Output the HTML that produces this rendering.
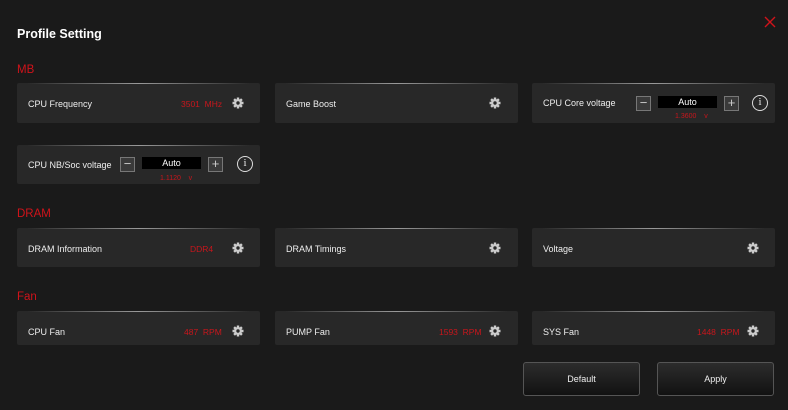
<!DOCTYPE html>
<html><head><style>
*{margin:0;padding:0;box-sizing:border-box}
body{width:788px;height:410px;background:#1a1a1a;font-family:"Liberation Sans",sans-serif;color:#e6e6e6;position:relative;overflow:hidden}
.a{position:absolute}
.t{font-size:12.5px;font-weight:bold;color:#fff;left:17px;top:27px}
.h{font-size:11.5px;color:#d0131a;left:17px}
.c{position:absolute;width:243px;background:#282828;border-radius:2px}
.c:before{content:"";position:absolute;left:10px;right:10px;top:0;height:1px;background:linear-gradient(90deg,transparent,#999 50%,transparent)}
.l{position:absolute;left:11px;font-size:9px;color:#eee}
.v{position:absolute;font-size:8.5px;color:#c8161c}
.g{position:absolute;width:12px;height:12px}
.bx{position:absolute;width:15px;height:15px;border:1px solid #777;background:#3a3a3a;color:#ccc;font-size:13px;line-height:12px;text-align:center}
.au{position:absolute;width:59px;height:12px;background:#000;color:#fff;font-size:9px;text-align:center;line-height:12px}
.i{position:absolute;width:16px;height:16px;border:1.5px solid #ddd;border-radius:50%;font-size:11px;text-align:center;line-height:13px;color:#eee;font-family:"Liberation Serif",serif}
.btn{position:absolute;top:362px;width:117px;height:34px;border:1px solid #555;border-radius:3px;background:linear-gradient(#2c2c2c,#121212);font-size:9px;text-align:center;line-height:33px;color:#eee}
</style></head><body>
<svg class="a" style="left:764px;top:16px" width="12" height="12"><path d="M1 1L11 11M11 1L1 11" stroke="#d0131a" stroke-width="1.4"/></svg>
<div class="a t">Profile Setting</div>
<div class="a h" style="top:64px">MB</div>
<div class="a h" style="top:208px">DRAM</div>
<div class="a h" style="top:291px">Fan</div>

<svg width="0" height="0" style="position:absolute"><defs><g id="gear"><circle cx="6" cy="6" r="4" fill="#ccc"/><g stroke="#ccc" stroke-width="2.4"><path d="M6 0.5V11.5M0.5 6H11.5M2.1 2.1L9.9 9.9M9.9 2.1L2.1 9.9"/></g><circle cx="6" cy="6" r="1.7" fill="#282828"/></g></defs></svg>

<div class="c" style="left:17px;top:83px;height:40px"><span class="l" style="top:16px">CPU Frequency</span><span class="v" style="left:164px;top:16px">3501 &nbsp;MHz</span><svg class="g" style="left:215px;top:14px"><use href="#gear"/></svg></div>
<div class="c" style="left:275px;top:83px;height:40px"><span class="l" style="top:16px">Game Boost</span><svg class="g" style="left:214px;top:14px"><use href="#gear"/></svg></div>
<div class="c" style="left:532px;top:83px;height:40px"><span class="l" style="top:15px">CPU Core voltage</span><div class="bx" style="left:104px;top:13px">−</div><div class="au" style="left:126px;top:13px">Auto</div><div class="bx" style="left:192px;top:13px">+</div><div class="i" style="left:220px;top:12px">i</div><span class="v" style="left:143px;top:30px;font-size:7px">1.3600 &nbsp;&nbsp;&nbsp;v</span></div>
<div class="c" style="left:17px;top:145px;height:39px"><span class="l" style="top:15px">CPU NB/Soc voltage</span><div class="bx" style="left:103px;top:12px">−</div><div class="au" style="left:125px;top:12px">Auto</div><div class="bx" style="left:191px;top:12px">+</div><div class="i" style="left:220px;top:11px">i</div><span class="v" style="left:143px;top:30px;font-size:7px">1.1120 &nbsp;&nbsp;&nbsp;v</span></div>

<div class="c" style="left:17px;top:228px;height:39px"><span class="l" style="top:16px">DRAM Information</span><span class="v" style="left:173px;top:16px">DDR4</span><svg class="g" style="left:215px;top:14px"><use href="#gear"/></svg></div>
<div class="c" style="left:275px;top:228px;height:39px"><span class="l" style="top:16px">DRAM Timings</span><svg class="g" style="left:214px;top:14px"><use href="#gear"/></svg></div>
<div class="c" style="left:532px;top:228px;height:39px"><span class="l" style="top:16px">Voltage</span><svg class="g" style="left:215px;top:14px"><use href="#gear"/></svg></div>

<div class="c" style="left:17px;top:311px;height:34px"><span class="l" style="top:16px">CPU Fan</span><span class="v" style="left:167px;top:16px">487 &nbsp;RPM</span><svg class="g" style="left:215px;top:14px"><use href="#gear"/></svg></div>
<div class="c" style="left:275px;top:311px;height:34px"><span class="l" style="top:16px">PUMP Fan</span><span class="v" style="left:164px;top:16px">1593 &nbsp;RPM</span><svg class="g" style="left:214px;top:14px"><use href="#gear"/></svg></div>
<div class="c" style="left:532px;top:311px;height:34px"><span class="l" style="top:16px">SYS Fan</span><span class="v" style="left:165px;top:16px">1448 &nbsp;RPM</span><svg class="g" style="left:215px;top:14px"><use href="#gear"/></svg></div>

<div class="btn" style="left:523px">Default</div>
<div class="btn" style="left:657px">Apply</div>
</body></html>
